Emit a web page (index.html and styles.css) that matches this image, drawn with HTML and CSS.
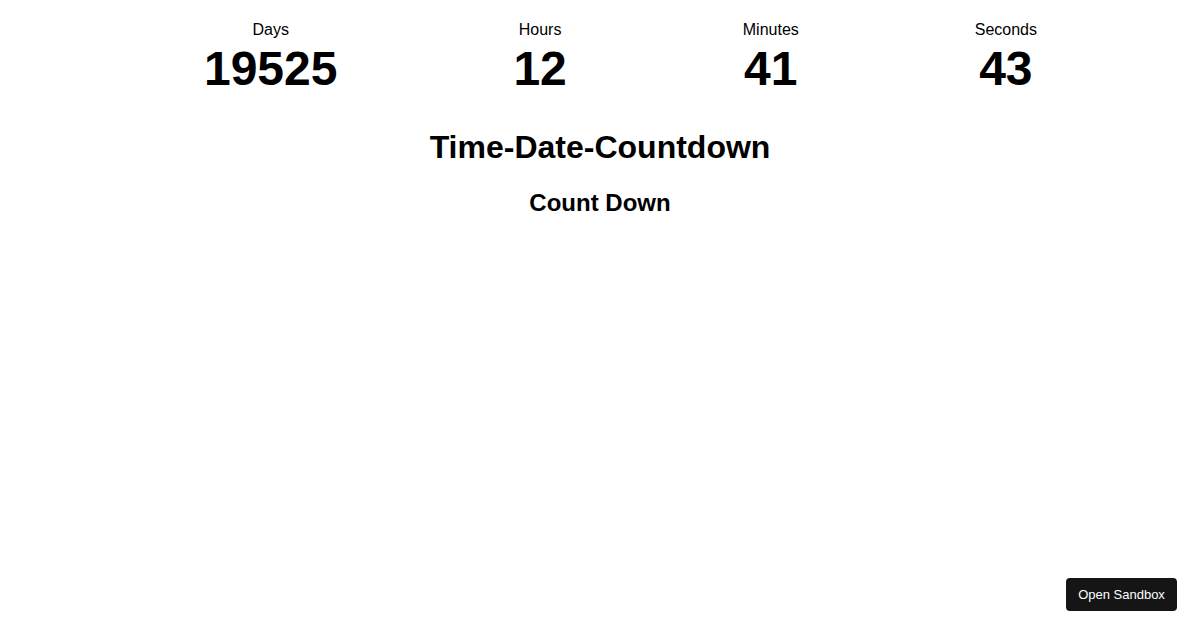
FILE: index.html
```html
<!DOCTYPE html>
<html>
<head>
<meta charset="utf-8">
<link rel="stylesheet" href="styles.css">
</head>
<body>
<div class="timer">
  <div class="unit"><div class="label">Days</div><div class="value">19525</div></div>
  <div class="unit"><div class="label">Hours</div><div class="value">12</div></div>
  <div class="unit"><div class="label">Minutes</div><div class="value">41</div></div>
  <div class="unit"><div class="label">Seconds</div><div class="value">43</div></div>
</div>
<h1 class="title">Time-Date-Countdown</h1>
<h2 class="subtitle">Count Down</h2>
<a class="sandbox-btn">Open Sandbox</a>
</body>
</html>
```
FILE: styles.css
```css
html, body {
  margin: 0;
  padding: 0;
  background: #fff;
  color: #000;
  font-family: "Liberation Sans", Arial, sans-serif;
}
.timer {
  display: flex;
  justify-content: space-around;
  padding: 21px 75px 0 116px;
}
.unit {
  display: flex;
  flex-direction: column;
  align-items: center;
}
.label {
  font-size: 16px;
  line-height: 18px;
}
.value {
  font-size: 48px;
  font-weight: bold;
  line-height: 55px;
  margin-top: 2px;
}
.title {
  text-align: center;
  font-size: 32px;
  font-weight: bold;
  line-height: 37px;
  margin: 33px 0 0;
}
.subtitle {
  text-align: center;
  font-size: 24px;
  font-weight: bold;
  line-height: 28px;
  margin: 23px 0 0;
}
.sandbox-btn {
  position: fixed;
  right: 23px;
  bottom: 19px;
  width: 111px;
  height: 33px;
  box-sizing: border-box;
  display: flex;
  align-items: center;
  justify-content: center;
  background: #151515;
  color: #fff;
  border-radius: 4px;
  font-size: 13px;
  text-decoration: none;
}
```
